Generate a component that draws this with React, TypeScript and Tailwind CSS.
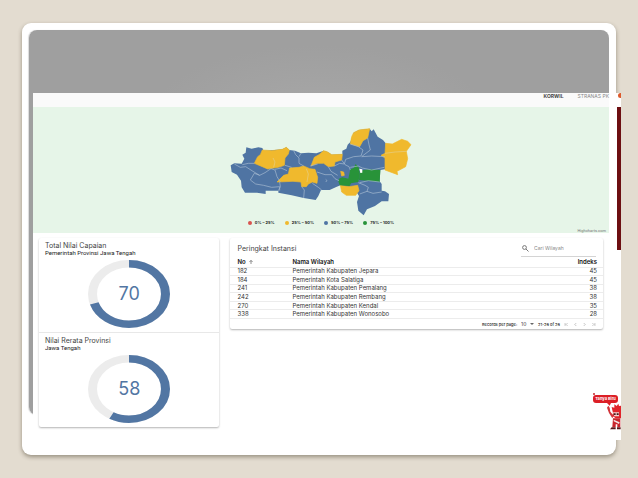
import React from "react";

type Row = { no: number; name: string; score: number };

const rows: Row[] = [
  { no: 182, name: "Pemerintah Kabupaten Jepara", score: 45 },
  { no: 184, name: "Pemerintah Kota Salatiga", score: 45 },
  { no: 241, name: "Pemerintah Kabupaten Pemalang", score: 38 },
  { no: 242, name: "Pemerintah Kabupaten Rembang", score: 38 },
  { no: 270, name: "Pemerintah Kabupaten Kendal", score: 35 },
  { no: 338, name: "Pemerintah Kabupaten Wonosobo", score: 28 },
];

const legend = [
  { label: "0% – 25%", dot: "bg-[#d9534f]" },
  { label: "25% – 50%", dot: "bg-[#f0b92d]" },
  { label: "50% – 75%", dot: "bg-[#4f74a3]" },
  { label: "75% – 100%", dot: "bg-[#289339]" },
];

const yellowAreas = [
  "M112 84 L140 86 L172 82 L184 76 L193 84 L190 96 L180 108 L178 130 L160 136 L128 141 L112 134 L88 124 L98 104 L106 98 Z",
  "M156 180 L176 160 L190 156 L194 138 L222 136 L236 132 L254 140 L270 142 L278 166 L276 184 L262 180 L250 186 L244 194 L230 194 L228 180 L204 178 Z",
  "M258 132 L268 106 L282 98 L296 86 L308 90 L320 98 L352 97 L350 114 L330 120 L328 132 L310 134 L296 124 L276 124 Z",
  "M376 66 L380 44 L386 32 L402 24 L434 20 L428 48 L414 56 L404 74 Z",
  "M482 64 L502 66 L530 52 L548 58 L558 68 L544 88 L548 110 L542 134 L516 148 L518 158 L480 144 L480 108 L468 100 L480 94 Z",
  "M346 190 L372 194 L398 190 L402 206 L392 220 L364 220 L350 210 Z",
  "M347 148 L356 150 L358 160 L350 162 Z",
];

const greenAreas = [
  "M342 170 L352 166 L370 170 L376 142 L386 138 L392 126 L402 138 L404 158 L400 180 L378 184 L374 192 L344 190 L340 178 Z",
  "M404 146 L430 142 L466 144 L464 180 L428 176 L402 174 Z",
];

const borders = [
  "M28 126 L46 136 L62 134 L84 148 L104 160 L88 154 L76 174 L92 186 L116 190 L140 196 L164 194 L164 206",
  "M104 160 L120 152 L138 140 L150 144 L156 164 L166 180",
  "M52 128 L70 124 L88 124",
  "M164 180 L166 194 L160 206",
  "M150 142 L168 138 L186 146",
  "M206 86 L212 98 L222 108 L222 124 L236 132",
  "M180 130 L200 136",
  "M228 94 L222 104",
  "M256 132 L278 126",
  "M230 194 L238 204 L236 228",
  "M262 184 L280 196 L290 204",
  "M276 150 L300 158 L320 158 L330 170 L342 176",
  "M310 134 L318 148 L338 160",
  "M350 114 L360 128 L372 134 L376 144",
  "M328 132 L344 124 L358 126",
  "M376 66 L400 74 L414 84 L408 102 L386 104 L362 112 L358 126",
  "M428 48 L432 68 L436 84 L420 96 L410 104 L440 102 L480 104",
  "M376 136 L400 132 L412 138 L440 144 L478 136",
  "M400 182 L420 190 L430 196 L426 208 L404 216",
  "M404 182 L430 176 L464 180",
  "M426 208 L444 214 L470 210",
  "M302 172 L306 176 L302 180",
];

function RegionMap() {
  return (
    <svg viewBox="0 0 576 285" className="h-[95px] w-[192px]" role="img" aria-label="Peta Jawa Tengah">
      <path
        fill="#4f74a3"
        d="M17 130 L28 124 L50 125 L58 110 L52 98 L62 92 L64 76 L80 80 L100 76 L112 78 L116 86 L140 85 L172 82 L184 76 L193 84 L210 86 L228 94 L250 92 L274 94 L296 86 L308 90 L320 98 L352 97 L352 86 L364 80 L368 68 L376 60 L386 32 L402 24 L434 20 L440 28 L446 22 L458 44 L474 54 L482 64 L484 92 L480 142 L466 144 L464 178 L470 186 L470 206 L480 208 L492 216 L490 238 L470 238 L450 252 L426 262 L416 280 L400 266 L396 240 L402 222 L392 206 L346 190 L332 196 L314 204 L288 204 L280 222 L272 234 L236 228 L200 220 L160 212 L160 206 L122 206 L122 216 L96 212 L60 212 L50 196 L48 176 L36 158 L20 150 Z"
      />
      <g fill="#f0b92d" stroke="#f0b92d" strokeWidth="2" strokeLinejoin="round">
        {yellowAreas.map((d) => <path key={d} d={d} />)}
      </g>
      <g fill="#289339">
        {greenAreas.map((d) => <path key={d} d={d} />)}
      </g>
      <g fill="none" stroke="#a9bcd2" strokeWidth="2" strokeLinejoin="round">
        {borders.map((d) => <path key={d} d={d} />)}
      </g>
      <path d="M144 108 L150 120 L146 136 M244 140 L250 156 L246 180 M480 94 L510 90 L544 88" fill="none" stroke="#e6cf8a" strokeWidth="2" />
      <path d="M403 140 L412 142 L412 152 L406 153 Z" fill="#ffffff" />
    </svg>
  );
}

function Gauge({ title, subtitle, value }: { title: string; subtitle: string; value: number }) {
  return (
    <section className="px-[6px] pt-[4px]">
      <h2 className="text-[7px] leading-[8px] text-[#444]">{title}</h2>
      <p className="text-[6px] leading-[6px] text-[#222] font-[Roboto,sans-serif]">{subtitle}</p>
      <div className="mt-[4px] grid place-items-center">
        <svg viewBox="0 0 100 100" preserveAspectRatio="none" className="col-start-1 row-start-1 h-[68px] w-[82px]">
          <circle cx="50" cy="50" r="44.5" fill="none" stroke="#ececec" strokeWidth="11" />
          <circle
            cx="50"
            cy="50"
            r="44.5"
            fill="none"
            stroke="#5276a3"
            strokeWidth="11"
            pathLength="100"
            strokeDasharray={`${value} 100`}
            transform="rotate(-90 50 50)"
          />
        </svg>
        <span className="col-start-1 row-start-1 text-[18px] leading-[20px] text-[#5276a3]">{value}</span>
      </div>
    </section>
  );
}

function PageButton({ label, d }: { label: string; d: string }) {
  return (
    <button type="button" aria-label={label} className="text-[#999]">
      <svg viewBox="0 0 14 14" className="size-[5px]" fill="none" stroke="currentColor" strokeWidth="1.6">
        <path d={d} />
      </svg>
    </button>
  );
}

function RankTable() {
  return (
    <section className="min-w-0 flex-1 rounded-[2px] bg-white shadow-[0_1px_2px_rgba(0,0,0,0.3)]">
      <div className="flex h-[20px] items-start justify-between px-[7px] pt-[5px]">
        <h2 className="text-[7px] leading-[11px] text-[#444]">Peringkat Instansi</h2>
        <label className="flex h-[14px] w-[75px] items-start gap-[5px] border-b border-[#d4d4d4] pl-[1px]">
          <svg viewBox="0 0 14 14" className="mt-[2px] size-[7px] shrink-0" fill="none" stroke="#777" strokeWidth="2">
            <circle cx="5" cy="5" r="3.8" />
            <path d="M8 8 L13 13" />
          </svg>
          <input
            type="text"
            aria-label="Cari Wilayah"
            placeholder="Cari Wilayah"
            className="h-[10px] w-full min-w-0 bg-transparent text-[5px] outline-none placeholder:text-[#888]"
          />
        </label>
      </div>
      <table className="h-[61px] w-full border-collapse text-[6px] leading-[6px] text-[#333]">
        <thead>
          <tr className="h-[9px] border-b border-[#ececec] text-left text-[#111]">
            <th className="w-[62px] p-0 pl-[7px] font-semibold">
              <span className="flex items-center gap-[3px]">
                No
                <svg viewBox="0 0 10 10" className="size-[4px]" fill="none" stroke="#666" strokeWidth="1.8">
                  <path d="M5 10 V1 M1 5 L5 1 L9 5" />
                </svg>
              </span>
            </th>
            <th className="p-0 font-semibold">Nama Wilayah</th>
            <th className="p-0 pr-[6px] text-right font-semibold">Indeks</th>
          </tr>
        </thead>
        <tbody>
          {rows.map((row) => (
            <tr key={row.no} className="border-b border-[#ececec]">
              <td className="p-0 pl-[7px]">{row.no}</td>
              <td className="p-0">{row.name}</td>
              <td className="p-0 pr-[6px] text-right">{row.score}</td>
            </tr>
          ))}
        </tbody>
      </table>
      <div className="flex h-[10px] items-center justify-end gap-[4px] pr-[7px] text-[4px] leading-[5px] font-medium text-[#222]">
        <label htmlFor="per-page">Records per page:</label>
        <span className="flex items-center gap-[3px]">
          <select id="per-page" className="appearance-none bg-transparent text-[5px] leading-[5px] text-[#666]">
            <option>10</option>
          </select>
          <svg viewBox="0 0 8 4" className="h-[2px] w-[4px]" fill="#666">
            <path d="M0 0 H8 L4 4 Z" />
          </svg>
        </span>
        <span>21-26 of 26</span>
        <PageButton label="First page" d="M3 3 V11 M10 3 L6 7 L10 11" />
        <PageButton label="Previous page" d="M9 3 L5 7 L9 11" />
        <PageButton label="Next page" d="M5 3 L9 7 L5 11" />
        <PageButton label="Last page" d="M11 3 V11 M4 3 L8 7 L4 11" />
      </div>
    </section>
  );
}

function Mascot() {
  return (
    <div className="absolute right-0 bottom-[9px] flex w-[29px] flex-col items-end">
      <span className="mr-[26px] size-[2px] rounded-full bg-[#c4262c]" />
      <span className="mr-[3px] w-[25px] rounded-[3px] bg-[#dc1f26] text-center text-[4px] leading-[8px] font-bold text-white">
        Tanya Biru
      </span>
      <svg viewBox="0 0 42 84" className="h-[28px] w-[14px]">
        <path d="M0 0 L12 0 L8 8 Z" fill="#dc1f26" />
        <path d="M16 22 L14 12 L22 14 L22 4 L29 9 L34 2 L36 9 L42 8 L42 46 L26 46 L16 38 L18 30 Z" fill="#e0242b" />
        <path d="M0 14 L4 8 L8 14 L10 26 L20 38 L16 46 L6 30 Z" fill="#d2343a" />
        <path d="M18 28 H36 V40 H22 Z" fill="#f3d5d2" />
        <path d="M20 31 H26 V36 H20 Z M29 31 H35 V36 H29 Z" fill="#4b1618" />
        <path d="M18 46 H40 V72 H31 V64 H26 V72 H16 Z" fill="#c9252c" />
        <path d="M20 50 L38 58 L36 63 L20 55 Z" fill="#f2e6e6" />
        <path d="M14 73 H26 V79 H9 Z M30 73 H41 V79 H30 Z" fill="#5a1518" />
      </svg>
    </div>
  );
}

function Dashboard() {
  return (
    <div className="relative flex bg-white">
      <div className="min-w-0 flex-1">
        <nav className="flex h-[14px] justify-end gap-[14px] bg-[#fafafa] text-[5px] leading-[7px]">
          <a href="#korwil" className="font-bold text-[#444]">KORWIL</a>
          <a href="#stranas" className="text-[#888]">STRANAS PK</a>
        </nav>
        <div className="flex h-[126px] flex-col items-center bg-[#e6f5e8] pt-[15px]">
          <RegionMap />
          <ul className="mt-[3px] flex gap-[10px] text-[4px] leading-[5px] font-bold text-[#222]">
            {legend.map((item) => (
              <li key={item.label} className="flex items-center gap-[3px]">
                <span className={`size-[4px] rounded-full ${item.dot}`} />
                {item.label}
              </li>
            ))}
          </ul>
          <a href="#highcharts" className="mt-auto mr-[3px] self-end text-[4px] leading-[5px] text-[#777] font-[Roboto,sans-serif]">Highcharts.com</a>
        </div>
        <div className="flex items-start gap-[11px] px-[6px] pt-[5px] pb-[13px]">
          <div className="w-[32%] divide-y divide-[#e8e8e8] rounded-[2px] bg-white pb-[4px] shadow-[0_1px_2px_rgba(0,0,0,0.3)]">
            <div className="pb-[4px]">
              <Gauge title="Total Nilai Capaian" subtitle="Pemerintah Provinsi Jawa Tengah" value={70} />
            </div>
            <Gauge title="Nilai Rerata Provinsi" subtitle="Jawa Tengah" value={58} />
          </div>
          <RankTable />
        </div>
      </div>
      <div className="flex w-[12px] flex-col items-end overflow-hidden">
        <span className="-mr-[2px] size-[5px] rounded-full bg-[#dd5a2c]" />
        <span className="mt-[9px] h-[143px] w-[4px] bg-[#6d0f12]" />
      </div>
      <Mascot />
    </div>
  );
}

export default function App() {
  return (
    <main className="min-h-screen bg-[#e3dcd0] px-[22px] pt-[23px] pb-[23px] font-[Inter,sans-serif]">
      <div className="rounded-[9px] bg-white px-[7px] pt-[7px] pb-[40px] shadow-[0_2px_4px_rgba(60,50,30,0.45)]">
        <div className="flex rounded-[8px] bg-[radial-gradient(ellipse_30%_20%_at_50%_24%,#a8a8a8_0%,#9f9f9f_100%)] pt-[63px] pl-[4px] shadow-[-1px_0_1px_rgba(0,0,0,0.15)]">
          <div className="-mr-[12px] -mb-[25px] min-w-0 flex-1">
            <Dashboard />
          </div>
        </div>
      </div>
    </main>
  );
}
